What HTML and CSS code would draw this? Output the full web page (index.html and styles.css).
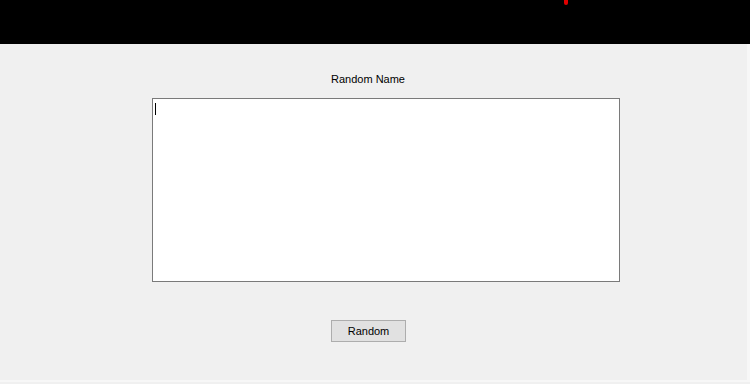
FILE: index.html
```html
<!DOCTYPE html>
<html>
<head>
<meta charset="utf-8">
<link rel="stylesheet" href="styles.css">
</head>
<body>
<div class="topbar"><span class="dot"></span></div>
<div class="window">
  <div class="label">Random Name</div>
  <div class="textbox"><span class="caret"></span></div>
  <div class="btn">Random</div>
</div>
</body>
</html>
```
FILE: styles.css
```css
html, body { margin: 0; padding: 0; }
body {
  width: 750px;
  height: 384px;
  background: #f0f0f0;
  font-family: "Liberation Sans", Arial, sans-serif;
  font-size: 11px;
  color: #000;
  overflow: hidden;
}
.topbar {
  height: 44px;
  background: #000;
  position: relative;
}
.dot {
  position: absolute;
  left: 564px;
  top: 0;
  width: 4px;
  height: 5px;
  background: #e00000;
  border-radius: 0 0 2px 2px;
}
.window {
  height: 338px;
  display: flex;
  flex-direction: column;
  align-items: flex-start;
  border-right: 3px solid #f7f7f7;
  border-bottom: 2px solid #f7f7f7;
  box-sizing: border-box;
}
.label {
  margin-top: 28px;
  margin-left: 331px;
  height: 14px;
  line-height: 14px;
}
.textbox {
  margin-top: 12px;
  margin-left: 152px;
  width: 466px;
  height: 182px;
  background: #fff;
  border: 1px solid #7a7a7a;
  position: relative;
}
.caret {
  position: absolute;
  left: 2px;
  top: 4px;
  width: 1px;
  height: 12px;
  background: #000;
}
.btn {
  margin-top: 38px;
  margin-left: 331px;
  width: 73px;
  height: 20px;
  border: 1px solid #adadad;
  background: #e1e1e1;
  line-height: 20px;
  text-align: center;
}
```
